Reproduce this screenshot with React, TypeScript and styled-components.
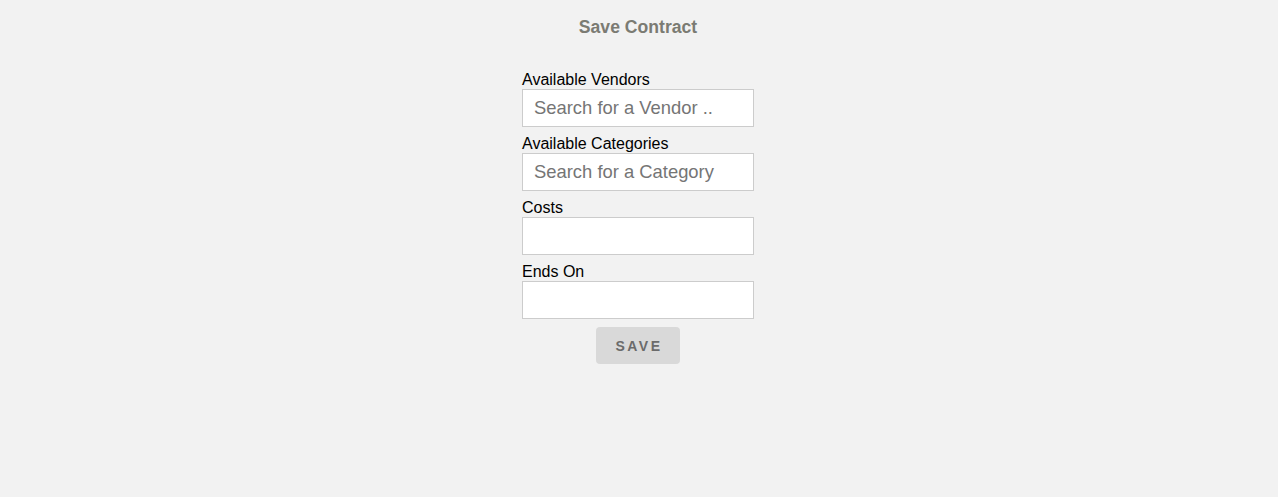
import styled, { createGlobalStyle } from "styled-components";

const GlobalStyle = createGlobalStyle`
  html, body {
    margin: 0;
    padding: 0;
    background: #f2f2f2;
    font-family: "Liberation Sans", Arial, sans-serif;
  }
  #root {
    min-height: 497px;
  }
`;

const fields = [
  { label: "Available Vendors", placeholder: "Search for a Vendor .." },
  { label: "Available Categories", placeholder: "Search for a Category" },
  { label: "Costs", placeholder: "" },
  { label: "Ends On", placeholder: "" },
];

const App = () => {
  return (
    <>
      <GlobalStyle />
      <Page>
        <Title>Save Contract</Title>
        <Form onSubmit={(e) => e.preventDefault()}>
          {fields.map((f) => (
            <Field key={f.label}>
              <Label>{f.label}</Label>
              <Input placeholder={f.placeholder} />
            </Field>
          ))}
          <SaveButton type="submit">Save</SaveButton>
        </Form>
      </Page>
    </>
  );
};
export default App;

const Page = styled.div`
  display: flex;
  flex-direction: column;
  align-items: center;
  padding-top: 17px;
  padding-right: 2px;
`;
const Title = styled.h3`
  margin: 0;
  font-size: 17.6px;
  line-height: 21px;
  font-weight: bold;
  color: #7b7b73;
`;
const Form = styled.form`
  width: 232px;
  margin-top: 25px;
  display: flex;
  flex-direction: column;
`;
const Field = styled.div`
  display: flex;
  flex-direction: column;
`;
const Label = styled.label`
  font-size: 16px;
  line-height: 18px;
  height: 26px;
  display: flex;
  align-items: flex-end;
  box-sizing: border-box;
  color: #000;
`;
const Input = styled.input`
  box-sizing: border-box;
  width: 232px;
  height: 38px;
  border: 1px solid #cccccc;
  background: #fff;
  padding: 0 11px;
  font-family: "Liberation Sans", Arial, sans-serif;
  font-size: 18.4px;
  color: #333;
  outline: none;
  &::placeholder {
    color: #757575;
  }
`;
const SaveButton = styled.button`
  align-self: center;
  margin-top: 8px;
  width: 84px;
  height: 37px;
  border: none;
  border-radius: 4px;
  background: #d9d9d9;
  color: #6b6b6b;
  font-family: "Liberation Sans", Arial, sans-serif;
  font-size: 14px;
  font-weight: bold;
  letter-spacing: 2.5px;
  text-transform: uppercase;
  padding: 0 0 0 2px;
  cursor: pointer;
`;
